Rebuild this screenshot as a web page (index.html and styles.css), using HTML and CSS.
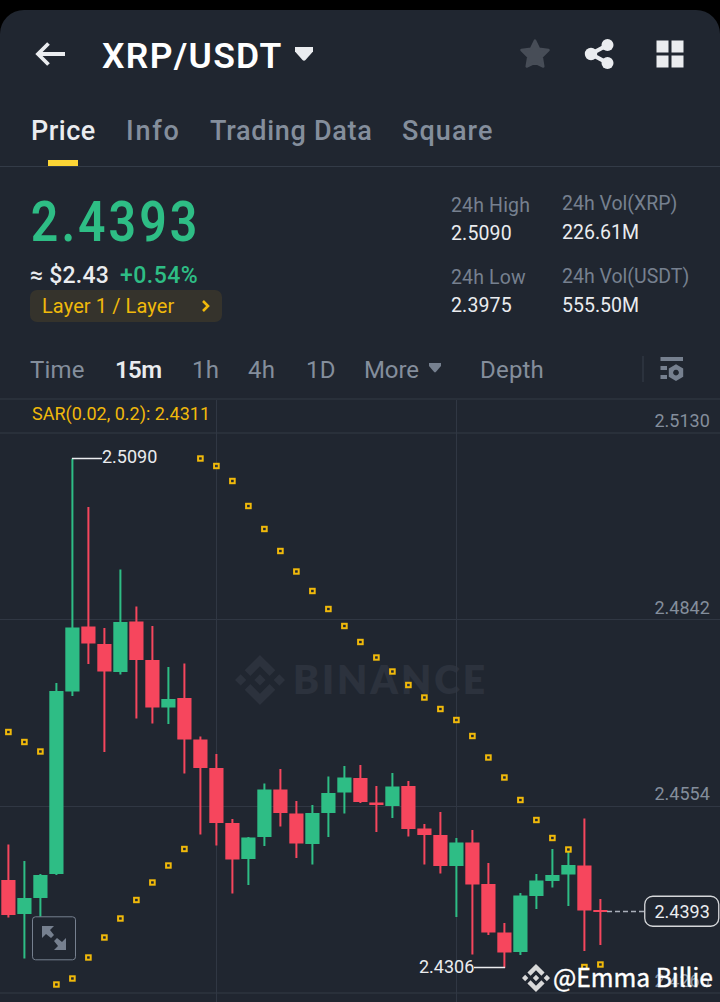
FILE: index.html
```html
<!DOCTYPE html>
<html lang="en">
<head>
<meta charset="utf-8">
<title>XRP/USDT</title>
<link rel="stylesheet" href="styles.css">
</head>
<body>
<main class="panel">
  <header class="topbar">
    <svg class="back" width="32" height="26" viewBox="0 0 32 26"><path d="M14.500 2.500 4 13l10.500 10.500M3.500 13H31" fill="none" stroke="#eaecef" stroke-width="3.800"/></svg>
    <h1 class="pair"><span class="pair-name">XRP/USDT</span></h1>
    <svg class="pair-caret" width="18" height="14" viewBox="0 0 18 14"><path d="M0 0h18v4.500L10.500 13q-1.500 1.500-3 0L0 4.500z" fill="#eaecef"/></svg>
    <div class="actions">
      <svg width="32" height="32" viewBox="0 0 32 32"><path d="M16 2.500 20 10.700 29.500 12 22.700 18.800 24.300 28.500 16 24.700 7.700 28.500 9.300 18.800 2.500 12 12 10.700z" fill="#474d57" stroke="#474d57" stroke-width="2.500" stroke-linejoin="round"/></svg>
      <svg width="30" height="30" viewBox="0 0 30 30"><path d="M23.500 6 7 15l16.500 9" fill="none" stroke="#eaecef" stroke-width="4.200"/><g fill="#eaecef"><circle cx="7" cy="15" r="6.200"/><circle cx="23.500" cy="6" r="6"/><circle cx="23.500" cy="24" r="6"/></g></svg>
      <svg width="28" height="28" viewBox="0 0 28 28"><path d="M.5.5h12v12H.5zM15.500.5h12v12h-12zM.5 15.500h12v12H.5zM15.500 15.500h12v12h-12z" fill="#eaecef"/></svg>
    </div>
  </header>

  <nav class="tabs">
    <span class="tab tab-active">Price</span>
    <span class="tab tab-info">Info</span>
    <span class="tab tab-data">Trading Data</span>
    <span class="tab tab-square">Square</span>
  </nav>

  <section class="summary">
    <div class="quote">
      <div class="last">2.4393</div>
      <div class="fiat"><span>≈ $2.43</span><span class="up">+0.54%</span></div>
      <div class="tag"><span>Layer 1 / Layer</span><svg width="8" height="12" viewBox="0 0 8 12"><path d="M1 1l5 5-5 5" fill="none" stroke="#f0b90b" stroke-width="2.600"/></svg></div>
    </div>
    <div class="stats stats-price">
      <div class="label">24h High</div><div class="value">2.5090</div>
      <div class="label">24h Low</div><div class="value">2.3975</div>
    </div>
    <div class="stats stats-volume">
      <div class="label">24h Vol(XRP)</div><div class="value">226.61M</div>
      <div class="label">24h Vol(USDT)</div><div class="value">555.50M</div>
    </div>
  </section>

  <nav class="intervals">
    <span class="iv iv-time">Time</span>
    <span class="iv iv-15 iv-active">15m</span>
    <span class="iv iv-1h">1h</span>
    <span class="iv iv-4h">4h</span>
    <span class="iv iv-1d">1D</span>
    <span class="iv iv-more">More<svg width="12" height="10" viewBox="0 0 12 10"><path d="M0 0h12v3L6.800 9q-.8.8-1.600 0L0 3z" fill="#76808f"/></svg></span>
    <span class="iv iv-depth">Depth</span>
    <svg class="settings" width="24" height="26" viewBox="0 0 24 26"><path d="M.5 1H23v4H.5zM.5 10H7v4H.5zM.5 19H7v4H.5z" fill="#76808f"/><path fill-rule="evenodd" d="M16 8.200l7.200 4.200v8.400L16 25l-7.200-4.200v-8.400zM16 13.700a2.900 2.900 0 1 0 .01 0z" fill="#76808f"/></svg>
  </nav>

  <svg class="chart" width="720" height="604" viewBox="0 398 720 604">
    <defs>
      <path id="logo" d="M16.624 13.920l2.717 2.716-7.353 7.353-7.353-7.352 2.717-2.717 4.636 4.660 4.636-4.660zM21.260 9.284L24 12l-2.715 2.716L18.568 12zM11.988 9.285l2.717 2.691-2.717 2.718L9.272 12zM2.716 9.284L5.409 12l-2.692 2.692L0 12zM11.988.012l7.353 7.329-2.717 2.715-4.636-4.636-4.635 4.660-2.718-2.716z"/>
    </defs>
    <g class="brand">
      <use href="#logo" transform="translate(235 655) scale(2.083)"/>
      <text x="293" y="694" textLength="192" lengthAdjust="spacing">BINANCE</text>
    </g>
    <path class="grid-bold" d="M0 399H720M0 433H720M0 993H720"/>
    <path class="grid" d="M0 619.500H720M0 806.500H720M216.500 400V1002M456.500 400V1002"/>
    <g id="candles"></g>
    <g id="sar" class="sar"></g>
    <path class="pointer" d="M72 458.500H102M474 967.500H505"/>
    <text class="mark" x="102" y="463">2.5090</text>
    <text class="mark" x="419" y="973">2.4306</text>
    <text class="indicator" x="32" y="420" textLength="178">SAR(0.02, 0.2): 2.4311</text>
    <g class="axis">
      <text x="654.500" y="427">2.5130</text>
      <text x="654.500" y="614">2.4842</text>
      <text x="654.500" y="800">2.4554</text>
      <text x="654.500" y="987">2.4266</text>
    </g>
    <path class="last-line" d="M607 911.500H644"/>
    <rect class="last-box" x="644.750" y="896.250" width="74" height="30" rx="8"/>
    <text class="mark" x="654.500" y="918">2.4393</text>
    <g class="expand">
      <rect x="32.500" y="916.800" width="43" height="43" rx="3"/>
      <path d="M42 926h12l-4 4 4 5-3 3-5-4-4 4zM66 950H54l4-4-4-5 3-3 5 4 4-4z"/>
    </g>
    <use href="#logo" class="credit-logo" transform="translate(522 964) scale(1.167)"/>
    <text class="credit" x="553" y="987" textLength="160" lengthAdjust="spacingAndGlyphs">@Emma Billie</text>
  </svg>
</main>
<script src="chart.js"></script>
</body>
</html>
```
FILE: styles.css
```css
body { margin: 0; background: #000; font-family: Roboto, "Liberation Sans", sans-serif; color: #eaecef; }
.panel { box-sizing: border-box; width: 720px; height: 992px; margin-top: 10px; border-radius: 24px 24px 0 0; background: #202630; overflow: hidden; }
.topbar { display: flex; align-items: center; height: 88px; padding: 0 36px 0 34px; }
.back { flex: none; }
.pair { margin: 0 0 0 36px; width: 193px; font-size: 35.500px; line-height: 44px; font-weight: 600; color: #fff; white-space: nowrap; padding-top: 4px; }
.pair-name { letter-spacing: 1.300px; }
.pair-caret { flex: none; }
.actions { display: flex; align-items: center; margin-left: auto; }
.actions svg:nth-child(2) { margin: 0 42px 0 33px; }

.tabs { display: flex; box-sizing: border-box; height: 69px; padding-left: 31px; border-bottom: 1px solid #333b47; }
.tab { height: 68px; line-height: 66px; font-size: 27px; font-weight: 500; color: #848e9c; letter-spacing: .7px; white-space: nowrap; }
.tab-active { display: flex; flex-direction: column; width: 95px; color: #eaecef; letter-spacing: .5px; }
.tab-active::after { content: ""; width: 30px; height: 6px; margin: -4px 0 0 17px; background: #fcd535; }
.tab-info { width: 84px; letter-spacing: 1.800px; }
.tab-data { width: 192px; }
.tab-square { letter-spacing: 1.100px; }

.summary { display: flex; height: 171px; }
.quote { width: 421px; padding: 24px 0 0 30px; }
.last { height: 64px; line-height: 62px; padding-left: 1px; font-size: 56px; font-weight: 600; letter-spacing: 3.500px; color: #2ebd85; transform: scaleX(.86); transform-origin: left; }
.fiat { display: flex; gap: 11px; height: 34px; margin-top: 1px; line-height: 40px; font-size: 23px; font-weight: 500; letter-spacing: .2px; }
.up { color: #2ebd85; letter-spacing: .5px; }
.tag { display: flex; box-sizing: border-box; align-items: center; justify-content: space-between; width: 192px; height: 32px; padding: 0 12px; border-radius: 7px; background: #35332c; color: #f0b90b; font-size: 20px; letter-spacing: .1px; }
.stats { line-height: 28px; font-size: 19.500px; white-space: nowrap; }
.stats-price { width: 111px; padding-top: 25px; letter-spacing: .15px; }
.stats-volume { padding-top: 23px; }
.label { color: #76808f; }
.value { margin-bottom: 16px; }
.stats-volume .value { margin-top: 1px; margin-bottom: 15.500px; }

.intervals { display: flex; height: 60px; padding-left: 30px; line-height: 65px; font-size: 24px; color: #848e9c; white-space: nowrap; }
.iv { letter-spacing: .2px; }
.iv-time { width: 85px; }
.iv-15 { width: 77px; }
.iv-1h { width: 56px; }
.iv-4h { width: 58px; }
.iv-1d { width: 58px; }
.iv-more { display: flex; width: 116px; letter-spacing: -.1px; }
.iv-more svg { margin: 25px 0 0 10px; }
.iv-depth { width: 162px; }
.iv-active { font-weight: 600; letter-spacing: -.6px; color: #eaecef; }
.settings { margin-top: 18px; padding-left: 16px; border-left: 2px solid #2b323d; }

.chart { display: block; font-family: Roboto, sans-serif; font-size: 18px; }
.brand { fill: #2c323d; }
.brand text { font-family: Lato, sans-serif; font-size: 39px; font-weight: 800; }
.grid-bold { stroke: #29303a; stroke-width: 2; }
.grid { stroke: #303743; stroke-width: 1; }
.rise { fill: #2ebd85; }
.fall { fill: #f6465d; }
.sar { fill: none; stroke: #f0b90b; stroke-width: 2; }
.pointer { stroke: #eaecef; stroke-width: 1.300; }
.mark { fill: #eaecef; }
.indicator { fill: #f0b90b; }
.axis { fill: #848e9c; }
.last-line { stroke: #aab0ba; stroke-width: 1.300; stroke-dasharray: 5 3; }
.last-box { fill: #202630; stroke: #d5d7da; stroke-width: 1.300; }
.expand rect { fill: #202630; stroke: #76808f; }
.expand path { fill: #76808f; }
.credit-logo { fill: #d9d9d9; }
.credit { fill: #fff; font-family: "Noto Sans CJK SC", sans-serif; font-size: 25px; font-weight: 400; stroke: #fff; stroke-width: .4; }
```
FILE: chart.js
```js
// Each row: high, body top, body bottom, low, rising (1) or falling (0)
const candles = [
  [844.5,880,915,917.5,0],[861,898,914,958.5,1],[874,875,898,930,1],[683,691,874,875,1],
  [458.5,627.5,691.5,696,1],[507,626.5,643.5,664,0],[628,644,671.5,752,0],[569.5,622,672,674.5,1],
  [606.5,621.5,660,718.5,0],[626,660,707.5,723.5,0],[667,699,707.5,724,1],[663.5,698,739.5,773.5,0],
  [736.5,739.5,768,834.5,0],[754,768,823,845.5,0],[819,823,859.5,893.5,0],[837,837.5,859,885,1],
  [783.5,789.5,837,846,1],[769,789.5,813,826.5,0],[801,813.5,843.5,858,0],[805,813,844,864.5,1],
  [776.5,793,813,837,1],[766,777.5,792.5,813.5,1],[765,778,802,803,0],[786,802.5,805,832,0],
  [773,786.5,806,818,1],[781,786,829,836.5,0],[824,828.5,835,864.5,0],[812,835,866,873.5,0],
  [838,842.5,866,917,1],[830,842.5,884.5,954.5,0],[863,884,932.5,935,0],[923,932.5,952.5,968,0],
  [893,895.5,952,955,1],[874,880.5,896,909,1],[849,875,881,887.5,1],[852,865,874.5,906,1],
  [818.5,865.5,910.5,951,0],[899,910,912,945,0]
];
const sar = [732,742,751.5,984.5,978.5,957.5,937.5,918.5,900,882.5,865.5,849,458.5,466,481,506,529,551,571.5,591,609,626,642,657.5,671.5,685,697.5,709,720,736,757.5,777.5,800,820,838,849.5,967,964.5];
const rect = (x, y, w, h, cls) => `<rect x="${x}" y="${y}" width="${w}" height="${h}" class="${cls}"/>`;
document.getElementById("candles").innerHTML = candles.map(([hi, top, bottom, lo, up], i) => {
  const x = 8.4 + i * 16, cls = up ? "rise" : "fall";
  return rect(x - 1, hi, 2, lo - hi, cls) + rect(x - 7.1, top, 14.2, bottom - top, cls);
}).join("");
document.getElementById("sar").innerHTML = sar.map((y, i) => rect(6.1 + i * 16, y - 2.2, 4.6, 4.4, "")).join("");
```
